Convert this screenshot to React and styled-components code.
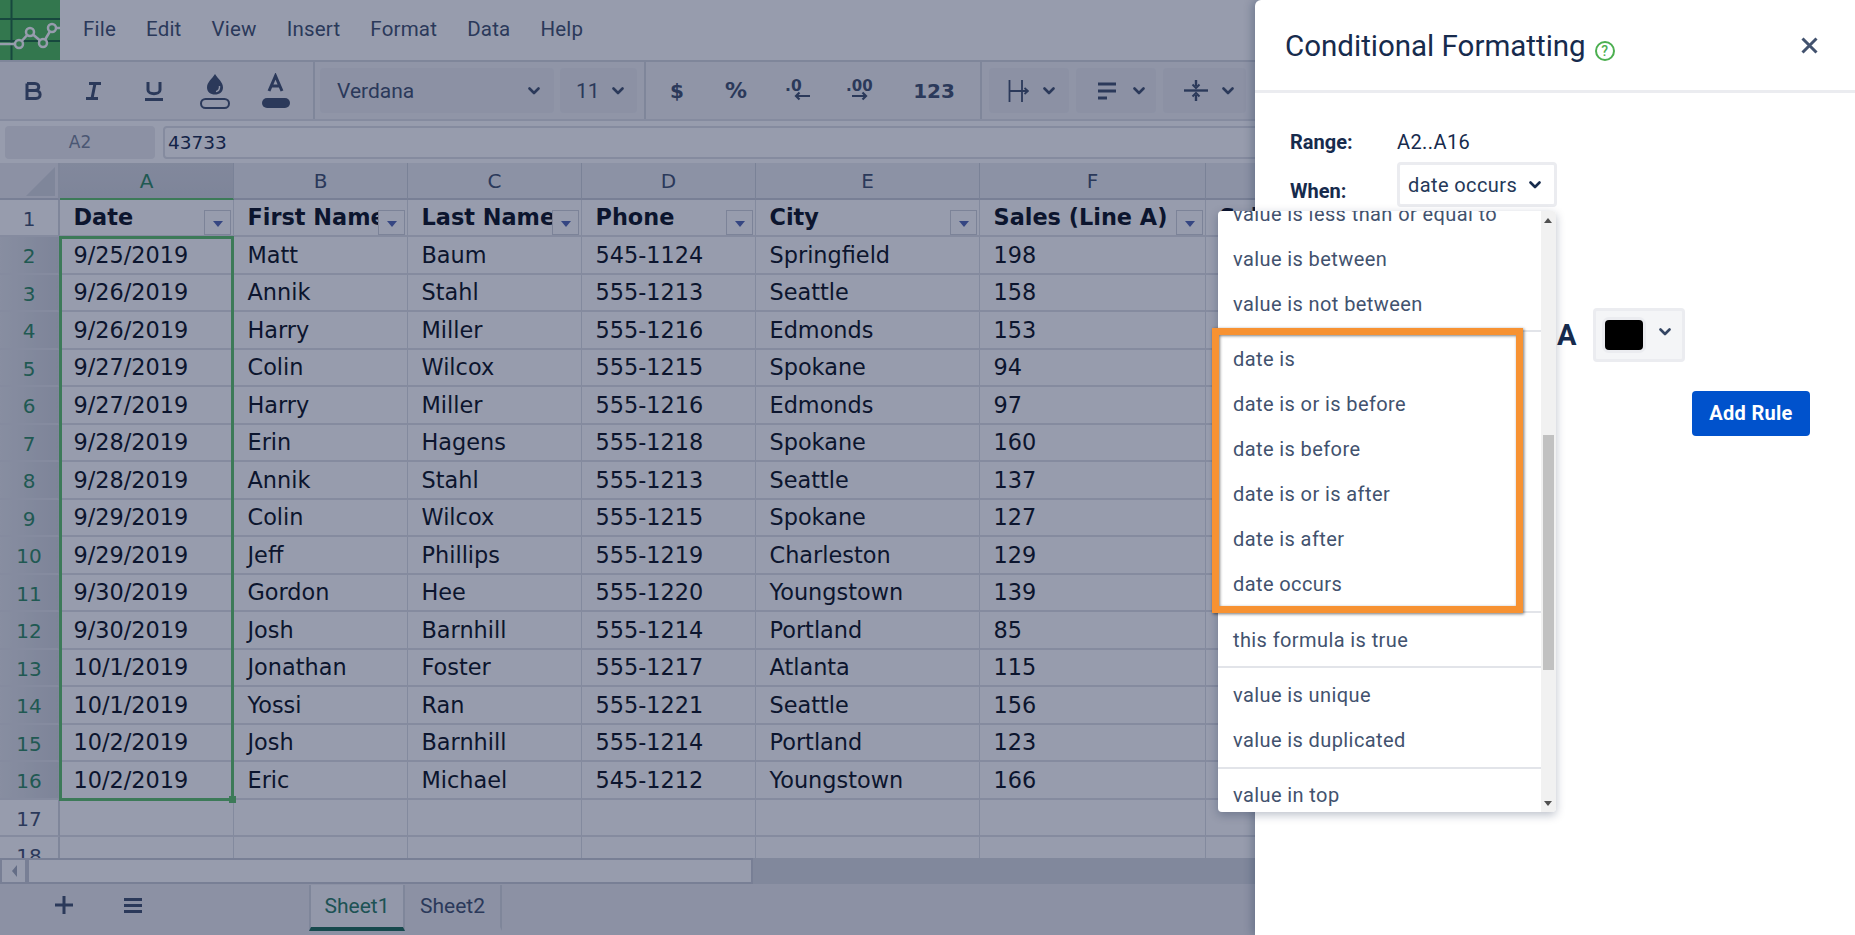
import React from 'react';
import styled, { createGlobalStyle } from 'styled-components';

const GlobalStyle = createGlobalStyle`
  html, body {
    margin: 0;
    padding: 0;
    background: #fff;
    overflow: hidden;
  }
  * {
    box-sizing: border-box;
  }
`;

const UI = '"Roboto", "Liberation Sans", sans-serif';
const SHEET = '"DejaVu Sans", "Liberation Sans", sans-serif';

const Page = styled.div`
  position: relative;
  width: 1855px;
  height: 935px;
  overflow: hidden;
  display: flex;
  flex-direction: column;
  font-family: ${UI};
  color: #42526e;
`;

const MenuBar = styled.div`
  height: 62px;
  flex: none;
  display: flex;
  border-bottom: 2px solid #d5d8de;
`;

const Logo = styled.svg`
  width: 60px;
  height: 60px;
  flex: none;
  display: block;
`;

const MenuItems = styled.nav`
  display: flex;
  align-items: center;
  gap: 30px;
  padding: 0 0 3px 23px;
`;

const MenuItem = styled.span`
  font-size: 20.5px;
  letter-spacing: 0.2px;
`;

const Toolbar = styled.div`
  height: 59px;
  flex: none;
  display: flex;
  align-items: center;
  padding-left: 3px;
  background: #f2f3f5;
  border-bottom: 2px solid #dfe1e6;
`;

const ToolButton = styled.span`
  width: ${(p) => p.$w || 60}px;
  height: 45px;
  flex: none;
  display: flex;
  align-items: center;
  justify-content: center;
  font-family: ${SHEET};
  font-weight: 700;
  font-size: ${(p) => p.$size || 20}px;
`;

const Separator = styled.span`
  width: 2px;
  height: 57px;
  flex: none;
  margin-left: ${(p) => p.$left || 0}px;
  background: #d5d8de;
`;

const ToolSelect = styled.div`
  width: ${(p) => p.$w}px;
  height: 45px;
  flex: none;
  margin-left: ${(p) => p.$left || 0}px;
  padding: 0 ${(p) => p.$right || 14}px 0 ${(p) => p.$pad || 17}px;
  display: flex;
  align-items: center;
  justify-content: space-between;
  background: #ebecf0;
  border-radius: 4px;
  font-size: 21px;
`;

const FormulaBar = styled.div`
  height: 42px;
  flex: none;
  display: flex;
  align-items: center;
  gap: 8px;
  padding-left: 5px;
`;

const NameBox = styled.div`
  width: 150px;
  height: 33px;
  flex: none;
  display: flex;
  align-items: center;
  justify-content: center;
  background: #ebecf0;
  border-radius: 4px;
  font-family: ${SHEET};
  font-size: 17px;
  color: #7a869a;
`;

const FormulaInput = styled.div`
  flex: 1;
  height: 33px;
  display: flex;
  align-items: center;
  padding-left: 3px;
  border: 2px solid #dfe1e6;
  border-radius: 4px;
  font-family: ${SHEET};
  font-size: 18.5px;
  color: #172b4d;
`;

const Grid = styled.div`
  position: relative;
  height: 695px;
  flex: none;
  overflow: hidden;
  display: grid;
  grid-template-columns: 60px 174px 174px 174px 174px 224px 226px 240px;
  grid-template-rows: 37px 37px repeat(17, 37.5px);
  font-family: ${SHEET};
`;

const Corner = styled.div`
  background: #ebecf0;
  border-bottom: 2px solid #c9cdd5;
  border-right: 2px solid #d5d8de;

  &::after {
    content: '';
    display: block;
    width: 29px;
    height: 29px;
    margin: 4px 0 0 26px;
    background: #d5d8de;
    clip-path: polygon(100% 0, 100% 100%, 0 100%);
  }
`;

const ColHead = styled.div`
  display: flex;
  align-items: center;
  justify-content: center;
  font-size: 20px;
  background: ${(p) => (p.$active ? 'linear-gradient(#dadde2, #d3d6dc)' : '#ecedf1')};
  color: ${(p) => (p.$active ? '#2f8a5f' : '#42526e')};
  border-right: 1px solid #cdd1d8;
  border-bottom: 2px solid ${(p) => (p.$active ? '#5fc46a' : '#c9cdd5')};
`;

const RowHead = styled.div`
  display: flex;
  align-items: center;
  justify-content: center;
  padding-top: 3px;
  font-size: 20px;
  background: ${(p) => (p.$active ? 'linear-gradient(90deg, #e4e6ea, #d2d5db)' : '#fff')};
  color: ${(p) => (p.$active ? '#2f8a5f' : '#42526e')};
  border-right: 2px solid #d5d8de;
  border-bottom: 2px solid #dfe1e6;
`;

const Cell = styled.div`
  position: relative;
  padding: 0 0 ${(p) => (p.$head ? 2 : 0)}px 13.5px;
  display: flex;
  align-items: center;
  white-space: nowrap;
  overflow: hidden;
  font-size: 22.4px;
  font-weight: ${(p) => (p.$head ? 700 : 400)};
  color: #0b1220;
  border-right: 1px solid #dcdfe4;
  border-bottom: 2px solid #e0e2e7;
`;

const Filter = styled.span`
  position: absolute;
  right: 2px;
  top: 10px;
  width: 27px;
  height: 25px;
  display: flex;
  align-items: center;
  justify-content: center;
  background: #fff;
  border: 1px solid #d0d3da;

  &::after {
    content: '';
    margin-top: 3px;
    border-left: 5px solid transparent;
    border-right: 5px solid transparent;
    border-top: 6px solid #5468b4;
  }
`;

const Selection = styled.div`
  position: absolute;
  left: 59px;
  top: 73px;
  width: 175px;
  height: 565px;
  border: 3px solid #5fc46a;
  pointer-events: none;

  &::after {
    content: '';
    position: absolute;
    right: -5px;
    bottom: -5px;
    width: 7px;
    height: 7px;
    background: #5fc46a;
  }
`;

const ScrollRow = styled.div`
  height: 26px;
  flex: none;
  display: flex;
  background: #d9dce2;
`;

const ScrollButton = styled.span`
  width: 27px;
  flex: none;
  display: flex;
  align-items: center;
  padding-left: 10px;
  background: #fff;
  border: 2px solid #c9cdd5;

  &::after {
    content: '';
    border-top: 6px solid transparent;
    border-bottom: 6px solid transparent;
    border-right: 5px solid #a5adba;
  }
`;

const ScrollThumb = styled.span`
  width: 726px;
  flex: none;
  background: #fff;
  border: 2px solid #c9cdd5;
`;

const SheetBar = styled.div`
  height: 51px;
  flex: none;
  display: flex;
  background: #ebecf0;
`;

const SheetActions = styled.div`
  width: 309px;
  flex: none;
  display: flex;
  align-items: center;
  gap: 51px;
  padding: 0 0 9px 55px;
`;

const SheetTab = styled.div`
  width: ${(p) => p.$w}px;
  height: 46px;
  margin-top: 1px;
  flex: none;
  display: flex;
  align-items: center;
  justify-content: center;
  font-size: 21px;
  background: ${(p) => (p.$active ? '#f8f8fa' : 'transparent')};
  color: ${(p) => (p.$active ? '#2a7d63' : '#42526e')};
  border-right: 2px solid #d5d8de;
  border-left: ${(p) => (p.$active ? '2px solid #d5d8de' : 'none')};
  border-bottom: 4px solid ${(p) => (p.$active ? '#1f6e57' : 'transparent')};
`;

const Blanket = styled.div`
  position: absolute;
  inset: 0;
  background: rgba(14, 26, 66, 0.43);
`;

const Panel = styled.aside`
  position: absolute;
  top: 0;
  right: 0;
  bottom: 0;
  width: 600px;
  background: #fff;
  border-top-left-radius: 6px;
  box-shadow: -3px 0 8px rgba(9, 30, 66, 0.25);
  color: #172b4d;
`;

const PanelHeader = styled.header`
  height: 93px;
  display: flex;
  align-items: center;
  justify-content: space-between;
  padding: 1px 37px 0 30px;
  border-bottom: 3px solid #ebecf0;
`;

const Title = styled.h2`
  margin: 0;
  display: flex;
  align-items: center;
  gap: 9px;
  font-size: 29.5px;
  font-weight: 400;
`;

const Help = styled.span`
  width: 20px;
  height: 20px;
  margin-top: 10px;
  display: flex;
  align-items: center;
  justify-content: center;
  border: 2px solid #4caf50;
  border-radius: 50%;
  font-size: 14px;
  font-weight: 500;
  color: #4caf50;
`;

const PanelBody = styled.div`
  padding: 34px 45px 0 35px;
`;

const FieldRow = styled.div`
  display: flex;
  height: ${(p) => p.$h}px;
  margin-top: ${(p) => p.$top || 0}px;
  margin-left: ${(p) => p.$left || 0}px;
  justify-content: ${(p) => p.$justify || 'flex-start'};
  align-items: flex-start;
  gap: ${(p) => p.$gap || 0}px;
  font-size: 20px;
`;

const Label = styled.span`
  width: 107px;
  flex: none;
  font-weight: 700;
  line-height: 30px;
  margin-top: ${(p) => p.$top || 0}px;
`;

const Value = styled.span`
  line-height: 30px;
  letter-spacing: 0.4px;
`;

const WhenSelect = styled.div`
  width: 160px;
  height: 45px;
  padding: 0 13px 0 8px;
  display: flex;
  align-items: center;
  justify-content: space-between;
  border: 3px solid #ebecf0;
  border-radius: 4px;
  font-size: 20px;
  letter-spacing: 0.4px;
  color: #253858;
`;

const FontA = styled.span`
  font-size: 29px;
  font-weight: 700;
  line-height: 54px;
`;

const ColorSelect = styled.div`
  width: 92px;
  height: 54px;
  padding: 0 11px 6px 9px;
  display: flex;
  align-items: center;
  justify-content: space-between;
  background: #f4f5f7;
  border: 3px solid #ebecf0;
  border-radius: 4px;
`;

const Swatch = styled.span`
  width: 38px;
  height: 30px;
  margin-top: 6px;
  background: #000;
  border-radius: 4px;
  box-shadow: 0 0 0 3px #ebecf0;
`;

const AddRule = styled.button`
  width: 118px;
  height: 45px;
  padding: 0 0 2px;
  border: none;
  border-radius: 4px;
  background: #0052cc;
  color: #fff;
  font-family: ${UI};
  font-size: 20px;
  font-weight: 700;
  letter-spacing: 0.3px;
`;

const MenuWrap = styled.div`
  position: absolute;
  left: -37px;
  top: 211px;
  width: 338px;
  height: 601px;
`;

const Menu = styled.div`
  height: 100%;
  display: flex;
  overflow: hidden;
  background: #fff;
  border-radius: 4px;
  box-shadow: 0 3px 10px rgba(9, 30, 66, 0.28);
  font-size: 20px;
  letter-spacing: 0.4px;
  color: #42526e;
`;

const MenuList = styled.div`
  flex: 1;
  margin-top: -20px;
`;

const Option = styled.div`
  height: 45px;
  padding-left: 15px;
  display: flex;
  align-items: center;
  white-space: nowrap;
`;

const Divider = styled.div`
  height: 2px;
  margin: ${(p) => p.$gap}px 0;
  background: #e2e4e9;
`;

const Track = styled.div`
  position: relative;
  width: 15px;
  flex: none;
  background: #f1f1f1;

  &::before,
  &::after {
    content: '';
    position: absolute;
    left: 3px;
    border-left: 4px solid transparent;
    border-right: 4px solid transparent;
  }
  &::before {
    top: 7px;
    border-bottom: 5px solid #505050;
  }
  &::after {
    bottom: 6px;
    border-top: 5px solid #505050;
  }
`;

const Thumb = styled.div`
  position: absolute;
  left: 2px;
  top: 224px;
  width: 11px;
  height: 235px;
  background: #c1c1c1;
`;

const Highlight = styled.div`
  position: absolute;
  left: -6px;
  top: 117px;
  width: 311px;
  height: 285px;
  border: 7px solid #f79232;
  box-shadow: 1px 1px 3px rgba(0, 0, 0, 0.55), inset 1px 1px 3px rgba(0, 0, 0, 0.5);
  pointer-events: none;
`;

const columns = ['A', 'B', 'C', 'D', 'E', 'F', 'G'];
const headers = ['Date', 'First Name', 'Last Name', 'Phone', 'City', 'Sales (Line A)', 'Sales (Line B)'];
const rows = [
  ['9/25/2019', 'Matt', 'Baum', '545-1124', 'Springfield', '198'],
  ['9/26/2019', 'Annik', 'Stahl', '555-1213', 'Seattle', '158'],
  ['9/26/2019', 'Harry', 'Miller', '555-1216', 'Edmonds', '153'],
  ['9/27/2019', 'Colin', 'Wilcox', '555-1215', 'Spokane', '94'],
  ['9/27/2019', 'Harry', 'Miller', '555-1216', 'Edmonds', '97'],
  ['9/28/2019', 'Erin', 'Hagens', '555-1218', 'Spokane', '160'],
  ['9/28/2019', 'Annik', 'Stahl', '555-1213', 'Seattle', '137'],
  ['9/29/2019', 'Colin', 'Wilcox', '555-1215', 'Spokane', '127'],
  ['9/29/2019', 'Jeff', 'Phillips', '555-1219', 'Charleston', '129'],
  ['9/30/2019', 'Gordon', 'Hee', '555-1220', 'Youngstown', '139'],
  ['9/30/2019', 'Josh', 'Barnhill', '555-1214', 'Portland', '85'],
  ['10/1/2019', 'Jonathan', 'Foster', '555-1217', 'Atlanta', '115'],
  ['10/1/2019', 'Yossi', 'Ran', '555-1221', 'Seattle', '156'],
  ['10/2/2019', 'Josh', 'Barnhill', '555-1214', 'Portland', '123'],
  ['10/2/2019', 'Eric', 'Michael', '545-1212', 'Youngstown', '166'],
  ['', '', '', '', '', ''],
  ['', '', '', '', '', ''],
];

const optionGroups = [
  ['value is less than or equal to', 'value is between', 'value is not between'],
  ['date is', 'date is or is before', 'date is before', 'date is or is after', 'date is after', 'date occurs'],
  ['this formula is true'],
  ['value is unique', 'value is duplicated'],
  ['value in top'],
];

const Chevron = ({ color = 'currentColor' }) => (
  <svg width="12" height="8" viewBox="0 0 12 8" fill="none" stroke={color} strokeWidth="2.6" strokeLinecap="round" strokeLinejoin="round">
    <polyline points="1.5,1.5 6,6 10.5,1.5" />
  </svg>
);

const Icon = ({ w, h, children, fill = 'none' }) => (
  <svg width={w} height={h} viewBox={`0 0 ${w} ${h}`} fill={fill} stroke="currentColor" strokeWidth="3">
    {children}
  </svg>
);

function App() {
  return (
    <Page>
      <GlobalStyle />
      <MenuBar>
        <Logo viewBox="0 0 60 60">
          <rect width="60" height="60" fill="#4fbf59" />
          <path d="M11.5 0V60M0 19H60M0 41H60" stroke="#1f6b3c" strokeWidth="2" />
          <polyline points="0,44 19,44 30,32 43,43 52,28 60,28" fill="none" stroke="#fff" strokeWidth="2.5" />
          <g fill="#4fbf59" stroke="#fff" strokeWidth="2.5">
            <circle cx="19" cy="44" r="4" />
            <circle cx="30" cy="32" r="4" />
            <circle cx="43" cy="43" r="4" />
            <circle cx="52" cy="28" r="4" />
          </g>
        </Logo>
        <MenuItems>
          {['File', 'Edit', 'View', 'Insert', 'Format', 'Data', 'Help'].map((m) => (
            <MenuItem key={m}>{m}</MenuItem>
          ))}
        </MenuItems>
      </MenuBar>

      <Toolbar>
        <ToolButton>
          <Icon w={17} h={18}>
            <path d="M2 1.5H10C15 1.5 15 8.5 10 8.5H2M2 8.5H11C16.5 8.5 16.5 16.5 11 16.5H2V1.5" />
          </Icon>
        </ToolButton>
        <ToolButton>
          <Icon w={17} h={18}>
            <path d="M4 1.5H16M1 16.5H13M10 1.5L7 16.5" />
          </Icon>
        </ToolButton>
        <ToolButton $w={61}>
          <Icon w={18} h={20}>
            <path d="M3 1V9C3 14 15 14 15 9V1" />
            <path d="M0 18.5H18" />
          </Icon>
        </ToolButton>
        <ToolButton $w={62}>
          <svg width="30" height="36" viewBox="0 0 30 36" fill="none" stroke="currentColor" strokeWidth="2">
            <path d="M15 1C18 6 23 9 23 14.5C23 19 19.5 21.5 15 21.5C10.5 21.5 7 19 7 14.5C7 9 12 6 15 1Z" fill="currentColor" stroke="none" />
            <path d="M19.5 13C19.8 16 18.5 18 16 18.6" stroke="#f4f5f7" strokeWidth="1.4" />
            <rect x="1" y="26" width="28" height="9" rx="4.5" />
          </svg>
        </ToolButton>
        <ToolButton>
          <svg width="30" height="36" viewBox="0 0 30 36" fill="none" stroke="currentColor" strokeWidth="3">
            <path d="M8 18L14.5 3L21 18M10 13H19" />
            <rect x="1" y="25" width="28" height="10" rx="5" fill="currentColor" stroke="none" />
          </svg>
        </ToolButton>
        <Separator $left={7} />
        <ToolSelect $w={234} $left={5}>
          Verdana
          <Chevron />
        </ToolSelect>
        <ToolSelect $w={77} $left={6} $pad={16} $right={13}>
          11
          <Chevron />
        </ToolSelect>
        <Separator $left={7} />
        <ToolButton $w={62}>$</ToolButton>
        <ToolButton $w={56} $size={22}>%</ToolButton>
        <ToolButton $w={66}>
          <svg width="30" height="26" viewBox="0 0 30 26" fill="none" stroke="currentColor" strokeWidth="2.2">
            <text x="3" y="13" fontFamily={SHEET} fontSize="15.5" fontWeight="700" fill="currentColor" stroke="none">.0</text>
            <path d="M28 18H14M17.5 14.5L14 18L17.5 21.5" />
          </svg>
        </ToolButton>
        <ToolButton $w={58}>
          <svg width="30" height="26" viewBox="0 0 30 26" fill="none" stroke="currentColor" strokeWidth="2.2">
            <text x="2" y="13" fontFamily={SHEET} fontSize="15" fontWeight="700" fill="currentColor" stroke="none">.00</text>
            <path d="M8 18H22M18.5 14.5L22 18L18.5 21.5" />
          </svg>
        </ToolButton>
        <ToolButton $w={92}>123</ToolButton>
        <Separator />
        <ToolSelect $w={80} $left={7} $pad={19} $right={14}>
          <svg width="21" height="22" viewBox="0 0 21 22" fill="none" stroke="currentColor" strokeWidth="1.8">
            <path d="M1.5 0V22M14 0V22M1.5 11H20M16.5 8L20 11L16.5 14" />
          </svg>
          <Chevron />
        </ToolSelect>
        <ToolSelect $w={80} $left={7} $pad={22} $right={11}>
          <svg width="18" height="18" viewBox="0 0 18 18" fill="none" stroke="currentColor" strokeWidth="2.8">
            <path d="M0 2H18M0 9H18M0 16H9" />
          </svg>
          <Chevron />
        </ToolSelect>
        <ToolSelect $w={83} $left={7} $pad={21} $right={12}>
          <svg width="24" height="21" viewBox="0 0 24 21" fill="none" stroke="currentColor" strokeWidth="2.4">
            <path d="M0 10.5H24" />
            <path d="M12 0V6M12 15V21" />
            <path d="M8.5 4.5L12 8L15.5 4.5M8.5 16.5L12 13L15.5 16.5" strokeWidth="2" />
          </svg>
          <Chevron />
        </ToolSelect>
      </Toolbar>

      <FormulaBar>
        <NameBox>A2</NameBox>
        <FormulaInput>43733</FormulaInput>
      </FormulaBar>

      <Grid>
        <Corner />
        {columns.map((c, i) => (
          <ColHead key={c} $active={i === 0}>{c}</ColHead>
        ))}
        <RowHead>1</RowHead>
        {headers.map((h) => (
          <Cell key={h} $head>
            {h}
            <Filter />
          </Cell>
        ))}
        {rows.map((row, r) => (
          <React.Fragment key={r}>
            <RowHead $active={r < 15}>{r + 2}</RowHead>
            {row.map((value, c) => (
              <Cell key={c}>{value}</Cell>
            ))}
            <Cell />
          </React.Fragment>
        ))}
        <Selection />
      </Grid>

      <ScrollRow>
        <ScrollButton />
        <ScrollThumb />
      </ScrollRow>

      <SheetBar>
        <SheetActions>
          <svg width="18" height="18" viewBox="0 0 18 18" stroke="currentColor" strokeWidth="3">
            <path d="M9 0V18M0 9H18" />
          </svg>
          <svg width="18" height="15" viewBox="0 0 18 15" stroke="currentColor" strokeWidth="3">
            <path d="M0 1.5H18M0 7.5H18M0 13.5H18" />
          </svg>
        </SheetActions>
        <SheetTab $w={96} $active>Sheet1</SheetTab>
        <SheetTab $w={97}>Sheet2</SheetTab>
      </SheetBar>

      <Blanket />

      <Panel>
        <PanelHeader>
          <Title>
            Conditional Formatting
            <Help>?</Help>
          </Title>
          <svg width="17" height="17" viewBox="0 0 17 17" fill="none" stroke="#42526e" strokeWidth="3">
            <path d="M1.5 1.5L15.5 15.5M15.5 1.5L1.5 15.5" />
          </svg>
        </PanelHeader>
        <PanelBody>
          <FieldRow $h={35}>
            <Label>Range:</Label>
            <Value>A2..A16</Value>
          </FieldRow>
          <FieldRow $h={45}>
            <Label $top={14}>When:</Label>
            <WhenSelect>
              date occurs
              <Chevron color="#172b4d" />
            </WhenSelect>
          </FieldRow>
          <FieldRow $h={54} $top={101} $left={267} $gap={17}>
            <FontA>A</FontA>
            <ColorSelect>
              <Swatch />
              <Chevron color="#344563" />
            </ColorSelect>
          </FieldRow>
          <FieldRow $h={45} $top={29} $justify="flex-end">
            <AddRule>Add Rule</AddRule>
          </FieldRow>
        </PanelBody>

        <MenuWrap>
          <Menu>
            <MenuList>
              {optionGroups.map((group, g) => (
                <React.Fragment key={g}>
                  {g > 0 && <Divider $gap={g === 1 ? 4.4 : 4.2} />}
                  {group.map((o) => (
                    <Option key={o}>{o}</Option>
                  ))}
                </React.Fragment>
              ))}
            </MenuList>
            <Track>
              <Thumb />
            </Track>
          </Menu>
          <Highlight />
        </MenuWrap>
      </Panel>
    </Page>
  );
}

export default App;
